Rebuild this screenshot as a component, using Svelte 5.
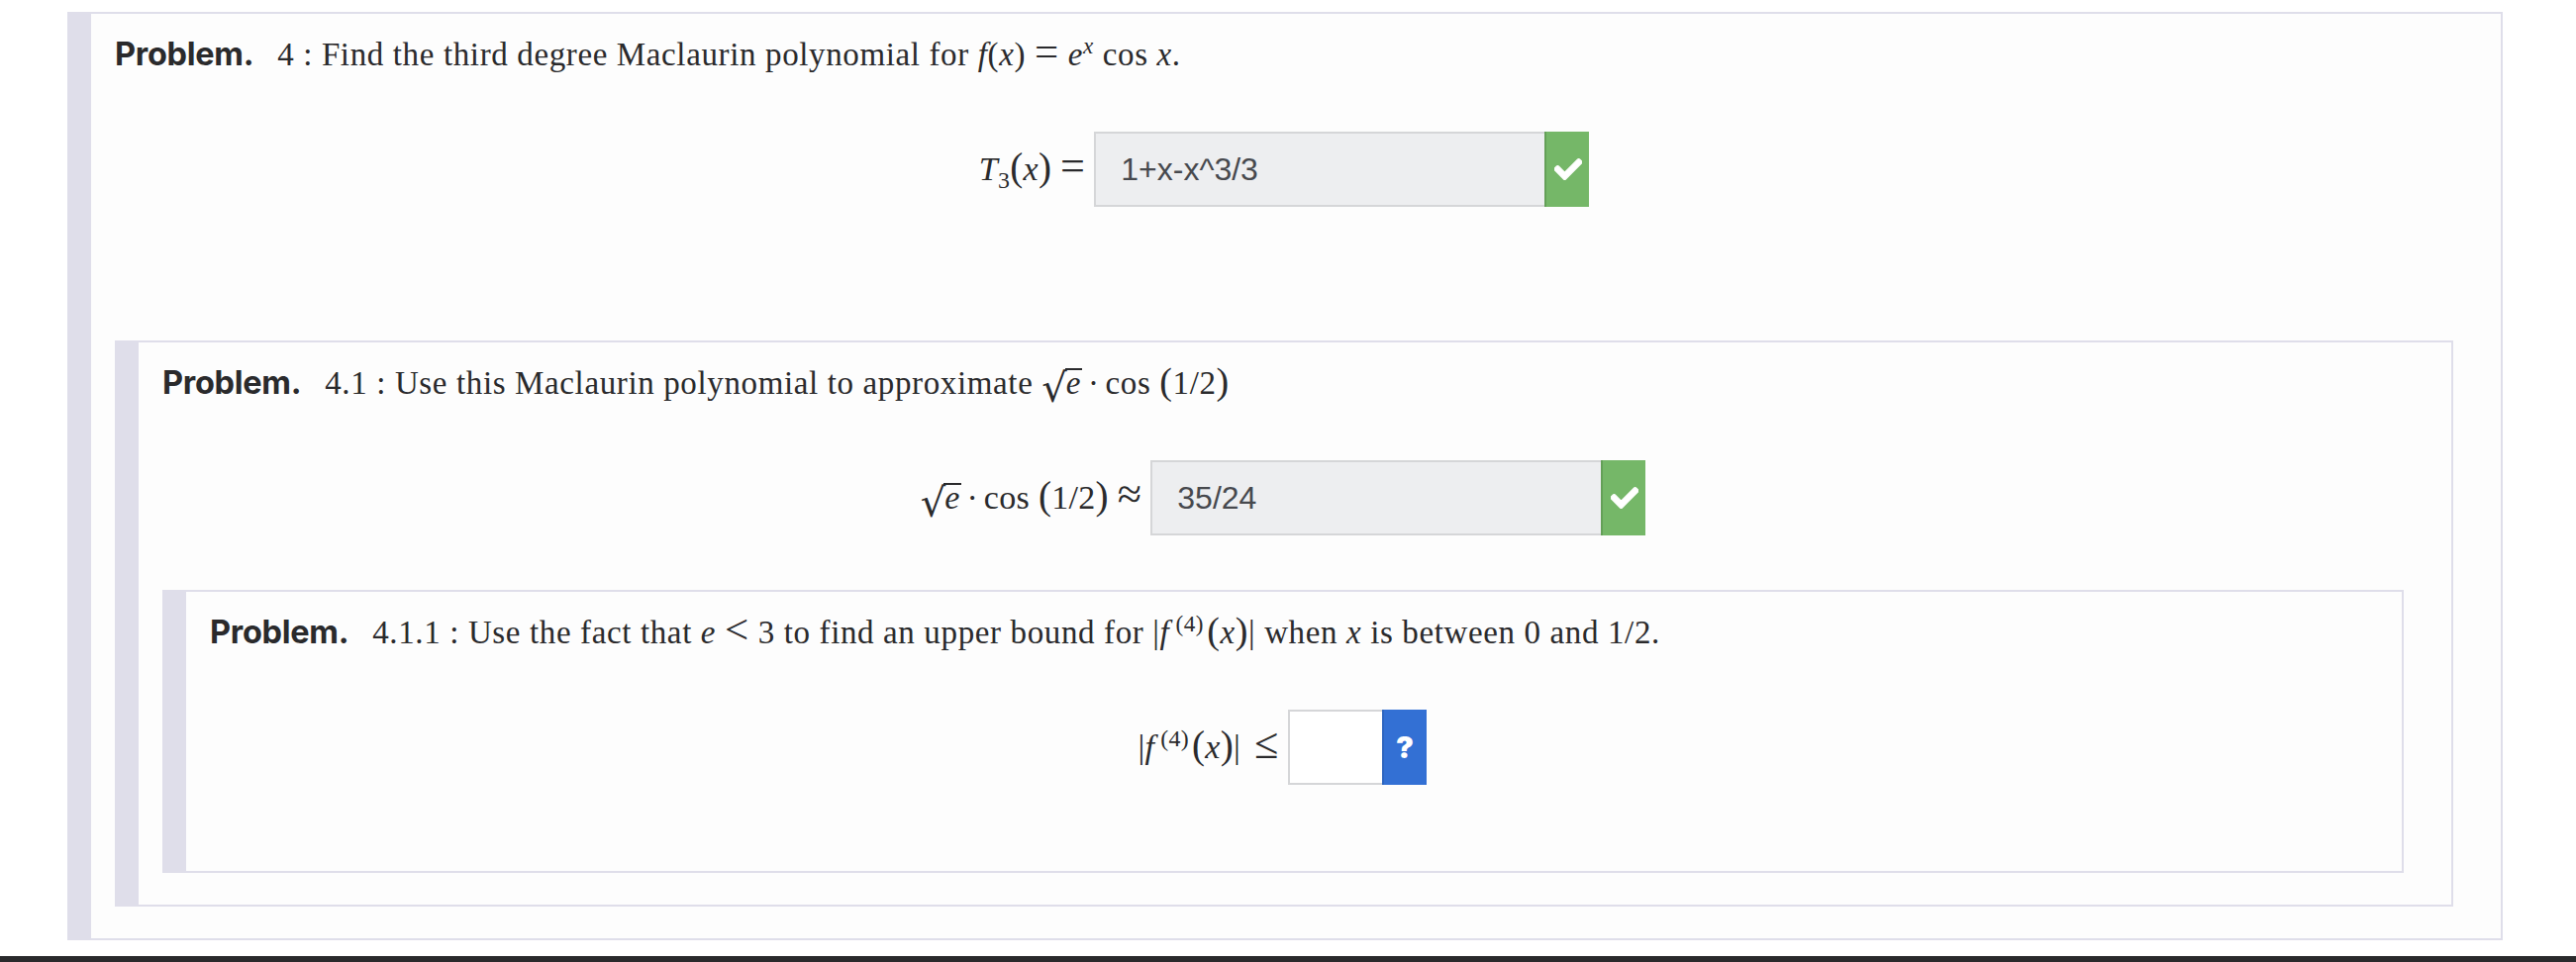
<script lang="ts">
	const checkPath =
		'M173.898 439.404l-166.4-166.4c-9.997-9.997-9.997-26.206 0-36.204l36.203-36.204c9.997-9.998 26.207-9.998 36.204 0L192 312.69 432.095 72.596c9.997-9.997 26.207-9.997 36.204 0l36.203 36.204c9.997 9.997 9.997 26.206 0 36.204l-294.4 294.401c-9.998 9.997-26.207 9.997-36.204-.001z';
</script>

{#snippet check()}
	<span class="btn good">
		<svg viewBox="0 0 512 512" width="28" height="28" aria-hidden="true"><path d={checkPath} fill="#fff" stroke="#fff" stroke-width="20" stroke-linejoin="round" /></svg>
	</span>
{/snippet}

{#snippet root()}
	<span class="radical"><span class="surd">√</span><i class="vinculum">e</i></span>
{/snippet}

<div class="page">
	<section class="problem">
		<p class="statement">
			<b>Problem.</b>
			<span class="body">4 : Find the third degree Maclaurin polynomial for <i>f</i>(<i>x</i>) <span class="rel">=</span> <i>e</i><sup><i>x</i></sup> cos <i>x</i>.</span>
		</p>
		<div class="row first">
			<span class="math"><i>T</i><sub>3</sub><span class="paren">(</span><i>x</i><span class="paren">)</span> <span class="rel">=</span></span>
			<span class="field filled wide">1+x-x^3/3</span>
			{@render check()}
		</div>

		<section class="problem">
			<p class="statement">
				<b>Problem.</b>
				<span class="body">4.1 : Use this Maclaurin polynomial to approximate {@render root()} <span class="dot">·</span> cos <span class="paren">(</span>1/2<span class="paren">)</span></span>
			</p>
			<div class="row">
				<span class="math">{@render root()} <span class="dot">·</span> cos <span class="paren">(</span>1/2<span class="paren">)</span> <span class="rel">≈</span></span>
				<span class="field filled wide">35/24</span>
				{@render check()}
			</div>

			<section class="problem">
				<p class="statement">
					<b>Problem.</b>
					<span class="body">4.1.1 : Use the fact that <i>e</i> <span class="rel">&lt;</span> 3 to find an upper bound for |<i>f</i><sup class="order">(4)</sup><span class="paren">(</span><i>x</i><span class="paren">)</span>| when <i>x</i> is between 0 and 1/2.</span>
				</p>
				<div class="row">
					<span class="math">|<i>f</i><sup class="order">(4)</sup><span class="paren">(</span><i>x</i><span class="paren">)</span>| <span class="rel le">≤</span></span>
					<span class="field"></span>
					<span class="btn ask">?</span>
				</div>
			</section>
		</section>
	</section>
</div>
<div class="footer-bar"></div>

<style>
	:global(body) {
		margin: 0;
		background: #fff;
	}

	.page {
		box-sizing: border-box;
		height: 966px;
		padding: 12px 74px 0 68px;
	}

	.problem {
		background: #fdfdfd;
		border: 2px solid #dfdeea;
		border-left-width: 24px;
		padding: 0 48px 32px 24px;
	}

	.statement {
		display: flex;
		align-items: baseline;
		height: 88px;
		margin: 0 0 31px;
		padding-top: 21px;
		box-sizing: border-box;
		color: #2a2a2c;
		white-space: nowrap;
	}

	.statement b {
		font-family: Inter, sans-serif;
		font-size: 32.5px;
		font-weight: 700;
		letter-spacing: -0.3px;
		margin-right: 24px;
	}

	.body,
	.math {
		font-family: 'Liberation Serif', serif;
		font-size: 33px;
		letter-spacing: 0.63px;
		color: #2a2a2c;
	}

	.math {
		font-size: 34px;
		letter-spacing: 0.3px;
	}

	sup,
	sub {
		font-size: 0.7em;
		line-height: 0;
	}

	.order {
		margin: 0 3px 0 6px;
	}

	.paren {
		font-size: 1.15em;
		line-height: 0;
	}

	.rel {
		font-size: 1.3em;
		line-height: 0;
	}

	.rel.le {
		margin-left: 5px;
	}

	.dot {
		margin: 0 -3px;
	}

	.radical {
		white-space: nowrap;
	}

	.surd {
		font-family: 'DejaVu Serif', serif;
		font-size: 40px;
		line-height: 0;
		vertical-align: -0.2em;
		letter-spacing: 0;
	}

	.vinculum {
		display: inline-block;
		line-height: 26px;
		border-top: 2px solid #2a2a2c;
		margin-left: -2px;
		padding: 0 1px;
	}

	.row {
		display: flex;
		justify-content: center;
		align-items: center;
		height: 76px;
		margin-bottom: 55px;
	}

	.row.first {
		margin-bottom: 135px;
	}

	.math {
		margin-right: 9px;
		white-space: nowrap;
	}

	.field {
		box-sizing: border-box;
		width: 95px;
		height: 76px;
		padding: 0 25px;
		display: flex;
		align-items: center;
		background: #fff;
		border: 2px solid #d5d6d8;
		border-right: 0;
		font-family: 'Liberation Sans', sans-serif;
		font-size: 32px;
		color: #47494e;
	}

	.field.wide {
		width: 455px;
	}

	.field.filled {
		background: #edeef0;
	}

	.btn {
		box-sizing: border-box;
		width: 45px;
		height: 76px;
		display: flex;
		align-items: center;
		justify-content: center;
		color: #fff;
		border-left: 2px solid transparent;
	}

	.good {
		background: #75b768;
		border-left-color: #64a058;
	}

	.ask {
		background: #3370d4;
		border-left-color: #2d65c0;
		font-family: Inter, sans-serif;
		font-size: 30px;
		font-weight: 900;
	}

	.footer-bar {
		height: 6px;
		background: #2a2a2c;
	}
</style>
